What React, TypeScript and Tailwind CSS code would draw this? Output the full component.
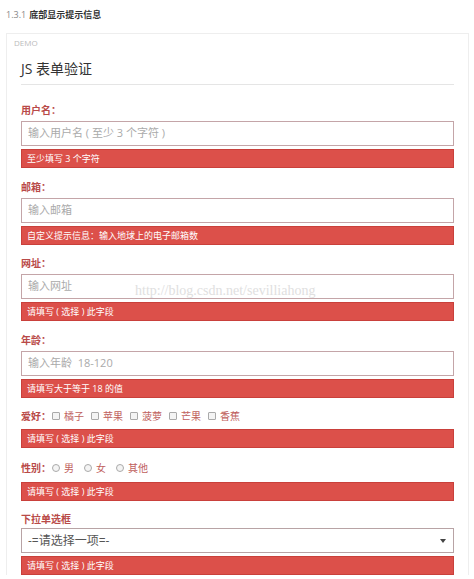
const font = { fontFamily: '"Open Sans", "Noto Sans CJK SC", sans-serif' };

function ErrorBar({ text }: { text: string }) {
  return (
    <div className="h-[19px] bg-[#dc504a] border border-[#c9403b] px-[5px] flex items-center text-[9px] text-white leading-none whitespace-pre">
      {text}
    </div>
  );
}

function Label({ text, className = "" }: { text: string; className?: string }) {
  return (
    <div className={`h-[14px] flex items-center text-[10px] font-bold text-[#b94a48] leading-none ${className}`}>
      {text}
    </div>
  );
}

function TextField({
  label,
  placeholder,
  error,
  gap,
}: {
  label: string;
  placeholder: string;
  error: string;
  gap: string;
}) {
  return (
    <div className={gap}>
      <Label text={label} className="mb-[4px]" />
      <div className="h-[25px] border border-[#c4a5a8] bg-white px-[6px] flex items-center text-[11px] text-[#aaa] mb-[3px] whitespace-pre">
        {placeholder}
      </div>
      <ErrorBar text={error} />
    </div>
  );
}

const REQUIRED = "请填写 ( 选择 ) 此字段";

export default function App() {
  const fruits = ["橘子", "苹果", "菠萝", "芒果", "香蕉"];
  const genders = ["男", "女", "其他"];

  return (
    <div className="w-[474px] h-[579px] overflow-hidden bg-white relative" style={font}>
      {/* heading */}
      <div className="h-[28px] pl-[6px] flex items-center gap-[3px] text-[9px] leading-none">
        <span className="text-[#888]">1.3.1</span>
        <span className="font-bold text-[#333]">底部显示提示信息</span>
      </div>

      <div className="ml-[6px] mt-[5px] w-[463px] border border-[#eee] border-b-0 px-[14px]">
        <div className="pt-[5px] -ml-[7px] text-[8px] text-[#bbb] leading-none h-[12px]">DEMO</div>
        <div className="mt-[13px] pb-[5px] border-b border-[#e5e5e5] text-[14px] text-[#333] leading-[20px]">
          JS 表单验证
        </div>

        <div className="pt-[18px]">
          <TextField gap="mb-[12px]" label="用户名：" placeholder="输入用户名 ( 至少 3 个字符 )" error="至少填写 3 个字符" />
          <TextField gap="mb-[11px]" label="邮箱：" placeholder="输入邮箱" error="自定义提示信息：输入地球上的电子邮箱数" />
          <TextField gap="mb-[12px]" label="网址：" placeholder="输入网址" error={REQUIRED} />
          <TextField gap="mb-[11px]" label="年龄：" placeholder="输入年龄  18-120" error="请填写大于等于 18 的值" />

          {/* hobbies */}
          <div className="mb-[13px]">
            <div className="h-[14px] flex items-center text-[10px] leading-none mb-[6px]">
              <span className="font-bold text-[#b94a48] mr-[1px]">爱好：</span>
              {fruits.map((f) => (
                <span key={f} className="flex items-center mr-[7px]">
                  <span className="w-[8px] h-[8px] border border-[#aaa] bg-[#f4f4f4] rounded-[1px] mr-[4px]" />
                  <span className="text-[#c0605c]">{f}</span>
                </span>
              ))}
            </div>
            <ErrorBar text={REQUIRED} />
          </div>

          {/* gender */}
          <div className="mb-[11px]">
            <div className="h-[14px] flex items-center text-[10px] leading-none mb-[7px]">
              <span className="font-bold text-[#b94a48] mr-[1px]">性别：</span>
              {genders.map((g) => (
                <span key={g} className="flex items-center mr-[10px]">
                  <span className="w-[8px] h-[8px] border border-[#aaa] bg-[#f4f4f4] rounded-full mr-[4px]" />
                  <span className="text-[#c0605c]">{g}</span>
                </span>
              ))}
            </div>
            <ErrorBar text={REQUIRED} />
          </div>

          {/* select */}
          <div>
            <Label text="下拉单选框" className="mb-[2px]" />
            <div className="h-[25px] border border-[#b8a3a5] bg-white pl-[6px] pr-[7px] flex items-center justify-between text-[12px] text-[#555] mb-[3px]">
              <span>-=请选择一项=-</span>
              <svg width="6" height="4" viewBox="0 0 6 4">
                <path d="M0 0 L6 0 L3 4 Z" fill="#444" />
              </svg>
            </div>
            <ErrorBar text={REQUIRED} />
          </div>
        </div>
      </div>

      {/* watermark */}
      <div
        className="absolute left-[135px] top-[284px] text-[14px] text-[#e0e0e0] leading-none pointer-events-none"
        style={{ fontFamily: '"Liberation Serif", serif' }}
      >
        http://blog.csdn.net/sevilliahong
      </div>
    </div>
  );
}
